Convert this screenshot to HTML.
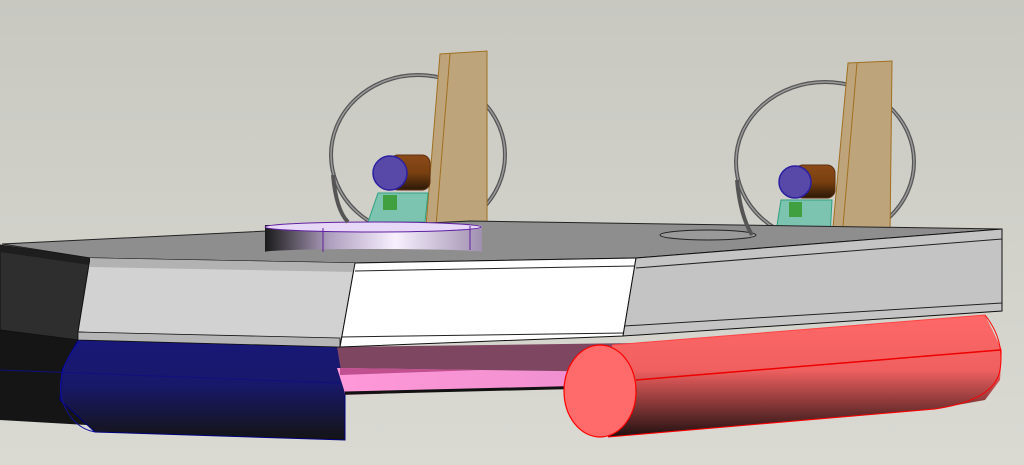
<!DOCTYPE html>
<html><head><style>html,body{margin:0;padding:0;width:1024px;height:465px;overflow:hidden;background:#d2d2cb}</style></head>
<body>
<svg width="1024" height="465" viewBox="0 0 1024 465" xmlns="http://www.w3.org/2000/svg">
<defs>
<linearGradient id="bg" x1="0" y1="0" x2="0" y2="1"><stop offset="0" stop-color="#c8c8c1"/><stop offset="1" stop-color="#dadad3"/></linearGradient>
<linearGradient id="ring" x1="0" y1="0" x2="1" y2="0"><stop offset="0" stop-color="#1a1a1a"/><stop offset="0.3" stop-color="#b0a0c0"/><stop offset="0.6" stop-color="#f8f0ff"/><stop offset="1" stop-color="#a090b0"/></linearGradient>
<linearGradient id="blue" x1="0" y1="0" x2="0" y2="1"><stop offset="0" stop-color="#181878"/><stop offset="0.45" stop-color="#18186a"/><stop offset="1" stop-color="#141414"/></linearGradient>
<linearGradient id="red" x1="0" y1="0" x2="0" y2="1"><stop offset="0" stop-color="#ff6868"/><stop offset="0.45" stop-color="#f06060"/><stop offset="1" stop-color="#201010"/></linearGradient>
<linearGradient id="pinks" x1="0" y1="0" x2="1" y2="0"><stop offset="0" stop-color="#ff98d8"/><stop offset="0.8" stop-color="#f090d0"/><stop offset="1" stop-color="#f8a0e0"/></linearGradient>
<linearGradient id="brown" x1="0" y1="0" x2="0" y2="1"><stop offset="0" stop-color="#8a4a18"/><stop offset="0.5" stop-color="#7a4010"/><stop offset="1" stop-color="#2a1808"/></linearGradient>
</defs>
<rect width="1024" height="465" fill="url(#bg)"/>

<!-- hoops back -->
<ellipse cx="418" cy="155" rx="87" ry="80" fill="none" stroke="#555" stroke-width="4"/>
<ellipse cx="418" cy="155" rx="87" ry="80" fill="none" stroke="#999" stroke-width="1.5"/>
<ellipse cx="825" cy="162" rx="89" ry="80" fill="none" stroke="#555" stroke-width="4"/>
<ellipse cx="825" cy="162" rx="89" ry="80" fill="none" stroke="#999" stroke-width="1.5"/>

<!-- tan panels -->
<polygon points="440,54 487,51 487,226 426,226" fill="#bea47a" stroke="#a07020" stroke-width="1"/>
<line x1="450" y1="54" x2="436" y2="226" stroke="#a07020"/>
<polygon points="848,63 892,61 890,236 832,238" fill="#bea47a" stroke="#a07020" stroke-width="1"/>
<line x1="857" y1="63" x2="842" y2="238" stroke="#a07020"/>

<!-- teal mounts -->
<polygon points="378,193 428,193 425,222 368,222" fill="#7cc4b0" stroke="#30a080"/>
<rect x="383" y="195" width="14" height="15" fill="#40a040"/>
<polygon points="781,200 832,200 830,238 775,238" fill="#7cc4b0" stroke="#30a080"/>
<rect x="789" y="202" width="13" height="15" fill="#40a040"/>

<!-- motors -->
<rect x="390" y="155" width="40" height="35" rx="8" fill="url(#brown)" stroke="#603010"/>
<circle cx="390" cy="173" r="17" fill="#5848a8" stroke="#2a20a0" stroke-width="1.5"/>
<rect x="795" y="165" width="40" height="33" rx="8" fill="url(#brown)" stroke="#603010"/>
<circle cx="795" cy="182" r="16" fill="#5848a8" stroke="#2a20a0" stroke-width="1.5"/>

<!-- deck top -->
<polygon points="2,244 470,221 1002,229 636,258 355,263 90,258" fill="#8e8e8e" stroke="#222" stroke-width="1"/>
<ellipse cx="708" cy="235" rx="48" ry="5" fill="#9a9a9a" stroke="#222" stroke-width="1"/>

<!-- ring -->
<rect x="265" y="225" width="217" height="27" fill="url(#ring)"/>
<ellipse cx="373" cy="252" rx="108" ry="3" fill="#8e8e8e"/>
<ellipse cx="373" cy="227" rx="108" ry="5" fill="#e8d8f8" stroke="#6020a0" stroke-width="1"/>
<line x1="323" y1="228" x2="323" y2="252" stroke="#6020a0"/>
<line x1="470" y1="226" x2="470" y2="250" stroke="#6020a0"/>

<!-- pontoons -->
<polygon points="0,330 345,347 345,440 0,420" fill="#151515"/>
<polygon points="78,340 345,347 345,440 95,432 60,400 62,370" fill="url(#blue)" stroke="#000080" stroke-width="1"/>
<path d="M80,341 Q55,370 62,400 Q72,428 95,432" fill="none" stroke="#1010a0"/>
<line x1="0" y1="370" x2="340" y2="383" stroke="#101080"/>

<polygon points="337,347 636,343 636,385 345,395" fill="#7e4660"/>
<polygon points="337,368 480,370 636,372 636,385 345,393" fill="url(#pinks)"/>
<polygon points="340,368 480,370 340,375" fill="#c05090"/>
<line x1="345" y1="393" x2="636" y2="386" stroke="#111" stroke-width="3"/>

<polygon points="612,345 985,315 1002,350 1000,380 985,400 935,409 608,437" fill="url(#red)"/>
<path d="M985,315 Q1005,340 1000,370 Q995,400 935,409" fill="none" stroke="#f00" stroke-width="1"/>
<line x1="612" y1="345" x2="985" y2="315" stroke="#f44" stroke-width="1"/>
<line x1="608" y1="437" x2="935" y2="409" stroke="#f00" stroke-width="1"/>
<line x1="636" y1="380" x2="1000" y2="350" stroke="#e00" stroke-width="1.5"/>
<ellipse cx="600" cy="391" rx="36" ry="46" fill="#ff6a6a" stroke="#f00" stroke-width="1.2"/>

<!-- hull panels -->
<polygon points="0,245 90,258 78,340 0,330" fill="#2e2e2e" stroke="#111"/>
<polygon points="0,252 90,265 90,258 0,245" fill="#1e1e1e"/>
<polygon points="90,258 355,263 340,347 78,332" fill="#d2d2d2" stroke="#111"/>
<polygon points="90,258 355,263 355,272 90,267" fill="#b2b2b2"/>
<polygon points="78,332 340,338 340,347 78,340" fill="#b6b6b6" stroke="#111" stroke-width="0.8"/>
<polygon points="355,263 636,258 623,336 340,347" fill="#ffffff" stroke="#111"/>
<line x1="355" y1="271" x2="634" y2="266" stroke="#222"/>
<line x1="341" y1="337" x2="624" y2="333" stroke="#222"/>
<polygon points="636,258 1002,229 1002,311 623,336" fill="#c4c4c4" stroke="#111"/>
<line x1="636" y1="268" x2="1002" y2="239" stroke="#222"/>
<line x1="624" y1="326" x2="1002" y2="303" stroke="#222"/>

<!-- hoops front lower parts -->
<path d="M333,175 Q336,210 348,222" fill="none" stroke="#555" stroke-width="4"/>
<path d="M737,180 Q740,215 752,235" fill="none" stroke="#555" stroke-width="4"/>
</svg>
</body></html>
